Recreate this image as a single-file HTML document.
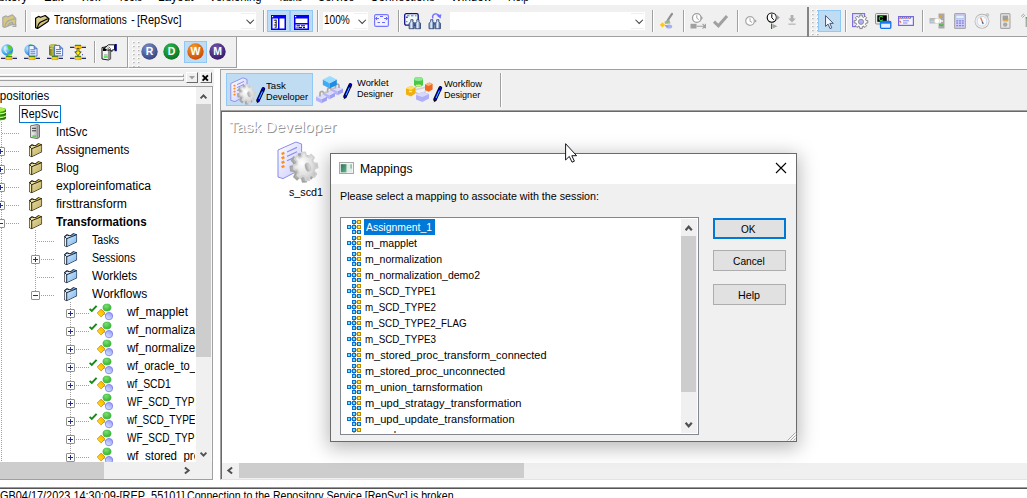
<!DOCTYPE html><html><head><meta charset="utf-8"><title>Workflow Manager</title><style>
html,body{margin:0;padding:0}
body{width:1027px;height:498px;overflow:hidden;position:relative;background:#fff;font-family:"Liberation Sans",sans-serif;}
.t{position:absolute;white-space:pre;transform-origin:0 50%;}
.b{position:absolute;box-sizing:border-box;}
svg{position:absolute;overflow:visible}
.clip{position:absolute;overflow:hidden}
</style></head><body>
<svg width="0" height="0" style="position:absolute"><defs><linearGradient id="gKh" x1="0" y1="0" x2="1" y2="1"><stop offset="0" stop-color="#e8dca0"/><stop offset="1" stop-color="#bfae62"/></linearGradient><linearGradient id="gBl" x1="0" y1="0" x2="1" y2="1"><stop offset="0" stop-color="#d4ecff"/><stop offset="1" stop-color="#7ab4ee"/></linearGradient><radialGradient id="gGlobe" cx="0.35" cy="0.35" r="0.8"><stop offset="0" stop-color="#c8f0ff"/><stop offset="0.6" stop-color="#40a0f0"/><stop offset="1" stop-color="#1060d0"/></radialGradient><radialGradient id="gGreen" cx="0.4" cy="0.3" r="0.8"><stop offset="0" stop-color="#7be070"/><stop offset="1" stop-color="#28b028"/></radialGradient><linearGradient id="gLav" x1="0.7" y1="0" x2="0.2" y2="1"><stop offset="0" stop-color="#9898f8"/><stop offset="1" stop-color="#d4ecff"/></linearGradient><linearGradient id="gYel" x1="0" y1="1" x2="1" y2="0"><stop offset="0" stop-color="#ffe878"/><stop offset="0.5" stop-color="#ffc800"/><stop offset="1" stop-color="#f0b000"/></linearGradient><radialGradient id="gGear" cx="0.4" cy="0.35" r="0.8"><stop offset="0" stop-color="#ffffff"/><stop offset="0.6" stop-color="#dcdcdc"/><stop offset="1" stop-color="#a8a8a8"/></radialGradient><linearGradient id="gSheet" x1="0" y1="0" x2="1" y2="1"><stop offset="0" stop-color="#ffffff"/><stop offset="1" stop-color="#c8c8ff"/></linearGradient><linearGradient id="gBino" x1="0" y1="0" x2="1" y2="0"><stop offset="0" stop-color="#7090c8"/><stop offset="0.45" stop-color="#e8f0ff"/><stop offset="1" stop-color="#284888"/></linearGradient><linearGradient id="gDb" x1="0" y1="0" x2="1" y2="0"><stop offset="0" stop-color="#b0f060"/><stop offset="0.5" stop-color="#58c818"/><stop offset="1" stop-color="#207800"/></linearGradient><linearGradient id="gSrv" x1="0" y1="0" x2="1" y2="0"><stop offset="0" stop-color="#f4f4f4"/><stop offset="1" stop-color="#a8a8a8"/></linearGradient><linearGradient id="gOlive" x1="0" y1="0" x2="1" y2="0"><stop offset="0" stop-color="#6a6a10"/><stop offset="0.4" stop-color="#b0b040"/><stop offset="1" stop-color="#707018"/></linearGradient><linearGradient id="gHole" x1="0" y1="0" x2="1" y2="0"><stop offset="0" stop-color="#9c9c9c"/><stop offset="1" stop-color="#e8e8e8"/></linearGradient><symbol id="i-chev" viewBox="0 0 9 6" overflow="visible"><path d="M0.5 0.8L4.5 4.8L8.5 0.8" stroke="#404040" stroke-width="1.1" fill="none"/></symbol><symbol id="i-grip" viewBox="0 0 7 25" overflow="visible"><rect x="0.3" y="0" width="2" height="2" fill="#fff"/><rect x="1.3" y="1" width="1.2" height="1.2" fill="#a0a0a0"/><rect x="0.3" y="4" width="2" height="2" fill="#fff"/><rect x="1.3" y="5" width="1.2" height="1.2" fill="#a0a0a0"/><rect x="0.3" y="8" width="2" height="2" fill="#fff"/><rect x="1.3" y="9" width="1.2" height="1.2" fill="#a0a0a0"/><rect x="0.3" y="12" width="2" height="2" fill="#fff"/><rect x="1.3" y="13" width="1.2" height="1.2" fill="#a0a0a0"/><rect x="0.3" y="16" width="2" height="2" fill="#fff"/><rect x="1.3" y="17" width="1.2" height="1.2" fill="#a0a0a0"/><rect x="0.3" y="20" width="2" height="2" fill="#fff"/><rect x="1.3" y="21" width="1.2" height="1.2" fill="#a0a0a0"/><rect x="0.3" y="24" width="2" height="2" fill="#fff"/><rect x="1.3" y="25" width="1.2" height="1.2" fill="#a0a0a0"/><rect x="5.2" y="0" width="2" height="2" fill="#fff"/><rect x="6.2" y="1" width="1.2" height="1.2" fill="#a0a0a0"/><rect x="5.2" y="4" width="2" height="2" fill="#fff"/><rect x="6.2" y="5" width="1.2" height="1.2" fill="#a0a0a0"/><rect x="5.2" y="8" width="2" height="2" fill="#fff"/><rect x="6.2" y="9" width="1.2" height="1.2" fill="#a0a0a0"/><rect x="5.2" y="12" width="2" height="2" fill="#fff"/><rect x="6.2" y="13" width="1.2" height="1.2" fill="#a0a0a0"/><rect x="5.2" y="16" width="2" height="2" fill="#fff"/><rect x="6.2" y="17" width="1.2" height="1.2" fill="#a0a0a0"/><rect x="5.2" y="20" width="2" height="2" fill="#fff"/><rect x="6.2" y="21" width="1.2" height="1.2" fill="#a0a0a0"/><rect x="5.2" y="24" width="2" height="2" fill="#fff"/><rect x="6.2" y="25" width="1.2" height="1.2" fill="#a0a0a0"/></symbol><symbol id="i-foldy" viewBox="0 0 14 14" overflow="visible"><path d="M0.6 3.6L3 1.7L4.8 2.5L6.8 2.7L9.4 0.7L12.5 1.7V8.7L2.7 13.6L0.6 12.6Z" fill="#f0e6a4" stroke="#161000" stroke-width="1.1" stroke-linejoin="round"/><path d="M7 2.8L9.4 0.9L12.3 1.8L8.6 3.3Z" fill="#d8c048"/><path d="M2.7 5.7L12.5 1.7V8.7L2.7 13.6Z" fill="url(#gKh)"/><path d="M0.6 3.6L2.7 5.7V13.6L0.6 12.6Z" fill="#f4ecb8"/><path d="M0.6 3.6L2.7 5.7V13.6M2.7 5.7L12.5 1.7" fill="none" stroke="#161000" stroke-width="0.9"/></symbol><symbol id="i-foldb" viewBox="0 0 14 14" overflow="visible"><path d="M0.6 3.6L3 1.7L4.8 2.5L6.8 2.7L9.4 0.7L12.5 1.7V8.7L2.7 13.6L0.6 12.6Z" fill="#d8ecff" stroke="#0c1420" stroke-width="1.1" stroke-linejoin="round"/><path d="M7 2.8L9.4 0.9L12.3 1.8L8.6 3.3Z" fill="#6aa8e8"/><path d="M2.7 5.7L12.5 1.7V8.7L2.7 13.6Z" fill="url(#gBl)"/><path d="M0.6 3.6L2.7 5.7V13.6L0.6 12.6Z" fill="#eaf4ff"/><path d="M0.6 3.6L2.7 5.7V13.6M2.7 5.7L12.5 1.7" fill="none" stroke="#0c1420" stroke-width="0.9"/></symbol><symbol id="i-openfolder" viewBox="0 0 15 14" overflow="visible"><path d="M0.6 3.3L3.6 1.4L5.5 2.3L10.2 0.5L14 3.8L13 6.6L2.6 13.5L0.6 12.6Z" fill="url(#gKh)" stroke="#000" stroke-width="1.2" stroke-linejoin="round"/><path d="M2.5 13.3C2.8 10 4 8 5.8 7L12.8 3.8" fill="none" stroke="#000" stroke-width="1.1"/></symbol><symbol id="i-openfolder-gray" viewBox="0 0 16 16" overflow="visible"><path d="M0.8 3.4L4.2 1.9L5.8 2.9L10.4 0.8L13.8 4.4L13.6 10L10.2 10.4L2.4 13.4L0.8 12.4Z" fill="#d6c880" stroke="#a8a8a8" stroke-width="1.2" stroke-linejoin="round"/><path d="M3 12C3.5 9 5 7 8 6.2L13 4.6M6 11C7 9 8.5 8.3 10.5 8.6L10.6 10.6H13.8V12.4H10.4" fill="none" stroke="#a8a8a8" stroke-width="1.2"/></symbol><symbol id="i-check" viewBox="0 0 8 7" overflow="visible"><path d="M0.6 3.8L2.8 6L7.6 0.8" stroke="#188818" stroke-width="1.9" fill="none"/></symbol><symbol id="i-wf" viewBox="0 0 16 16" overflow="visible"><path d="M4.5 9L10 4M4.5 9.5L12 12" stroke="#b8b8c8" stroke-width="0.9"/><ellipse cx="10" cy="3.5" rx="4.1" ry="3.5" fill="url(#gGreen)" stroke="#30b030" stroke-width="0.5"/><circle cx="12" cy="12.1" r="3.7" fill="url(#gLav)" stroke="#7878e8" stroke-width="0.8"/><path d="M4.1 5.1L8 9L4.1 12.9L0.2 9Z" fill="url(#gYel)" stroke="#c88c00" stroke-width="0.8"/></symbol><symbol id="i-db" viewBox="0 0 16 14" overflow="visible"><path d="M0 2.5C0 -0.3 16 -0.3 16 2.5V11C16 14.3 0 14.3 0 11Z" fill="url(#gDb)"/><path d="M0 5.2C2 7.6 14 7.6 16 5.2M0 8.8C2 11.2 14 11.2 16 8.8" stroke="#d8ff90" stroke-width="1.3" fill="none"/><path d="M0 6.4C2 8.8 14 8.8 16 6.4M0 10C2 12.4 14 12.4 16 10" stroke="#186000" stroke-width="0.8" fill="none"/><ellipse cx="8" cy="2.6" rx="7.6" ry="2.2" fill="#a8f048"/></symbol><symbol id="i-server" viewBox="0 0 10 15" overflow="visible"><path d="M0.6 1.8L7 0.5L9.5 1.2V13.2L7.4 14.6L0.6 13.4Z" fill="url(#gSrv)" stroke="#606060" stroke-width="0.9" stroke-linejoin="round"/><path d="M7.3 1.6V14.4" stroke="#808080" stroke-width="0.8"/><path d="M2 4.3H6.2M2 6.8H6.2" stroke="#202020" stroke-width="0.9"/><path d="M2.4 12.1H6" stroke="#20d020" stroke-width="1.2"/></symbol><symbol id="i-map" viewBox="0 0 14 14" overflow="visible"><path d="M2 7H7M7 2V12M7 2H12M7 7H12M7 12H12" stroke="#806020" stroke-width="1"/><rect x="5.5" y="0.5" width="3" height="3" fill="#70e4ff" stroke="#0c6cd4" stroke-width="1"/><rect x="10.5" y="0.5" width="3" height="3" fill="#ffe848" stroke="#b88800" stroke-width="1"/><rect x="0.5" y="5.5" width="3" height="3" fill="#70e4ff" stroke="#0c6cd4" stroke-width="1"/><rect x="5.5" y="5.5" width="3" height="3" fill="#70e4ff" stroke="#0c6cd4" stroke-width="1"/><rect x="10.5" y="5.5" width="3" height="3" fill="#ffe848" stroke="#b88800" stroke-width="1"/><rect x="5.5" y="10.5" width="3" height="3" fill="#70e4ff" stroke="#0c6cd4" stroke-width="1"/><rect x="10.5" y="10.5" width="3" height="3" fill="#70e4ff" stroke="#0c6cd4" stroke-width="1"/></symbol><symbol id="i-navwin" viewBox="0 0 15 15" overflow="visible"><rect x="0" y="0" width="15" height="15" fill="#0000ff"/><rect x="1.5" y="3.5" width="5.5" height="10" fill="#fff"/><rect x="8.5" y="3.5" width="5" height="10" fill="#fff"/><rect x="1" y="1" width="1.2" height="1.2" fill="#fff"/><path d="M5.2 4.6V12.6M2.8 5.2H5.2M3.6 7.6H5.2M2.8 10H5.2M3.6 12.2H5.2" stroke="#000" stroke-width="0.85"/></symbol><symbol id="i-outwin" viewBox="0 0 15 15" overflow="visible"><rect x="0" y="0" width="15" height="15" fill="#0000ff"/><rect x="1.5" y="3.5" width="12" height="4.5" fill="#fff"/><rect x="1.5" y="9.5" width="12" height="4" fill="#fff"/><rect x="1" y="1" width="1.2" height="1.2" fill="#fff"/><path d="M2.5 10.8H6M7 10.8H11M2.5 12.6H3.5M4.5 12.6H8M9 12.6H11" stroke="#000" stroke-width="1"/></symbol><symbol id="i-fit" viewBox="0 0 15 13" overflow="visible"><rect x="0.6" y="0.6" width="13.8" height="11.8" rx="1.5" fill="#f4f4ff" stroke="#7878ff" stroke-width="1.2"/><path d="M1.5 4.5H5M13.5 4.5H10M3.2 2.8L1.5 4.5L3.2 6.2M11.8 2.8L13.5 4.5L11.8 6.2M6 2.5H9M3.5 8.5H6M8 8.5H11" stroke="#6868f8" stroke-width="1" fill="none"/></symbol><symbol id="i-find" viewBox="0 0 17 16" overflow="visible"><rect x="0.7" y="0.7" width="13.5" height="11.5" rx="1.5" fill="#f8f8f8" stroke="#101080" stroke-width="1.3"/><path d="M3 2.8H5.5M7 2.8H9.5M11 2.8H12.5" stroke="#10a0a0" stroke-width="1"/><rect x="2.2" y="3.6" width="1.4" height="1.4" fill="#0000e0"/><rect x="2.2" y="8" width="1.2" height="1.2" fill="#10a0a0"/><g transform="translate(4.6 6.2)"><path d="M2.2 0.5H4.4V2.5L5.6 4V9.5H0.5V4L2.2 2.5Z" fill="url(#gBino)" stroke="#28406c" stroke-width="0.8"/><path d="M8.2 0.5H10.4V2.5L11.9 4V9.5H6.8V4L8.2 2.5Z" fill="url(#gBino)" stroke="#28406c" stroke-width="0.8"/><rect x="5.2" y="3.2" width="2" height="2.2" fill="#3c5c98"/></g></symbol><symbol id="i-findnext" viewBox="0 0 15 16" overflow="visible"><path d="M5 5.5C3.5 2.5 6 0.6 8.2 0.9C10.2 1.2 11 2.5 11.2 3.6" stroke="#7070ff" stroke-width="1.4" fill="none"/><path d="M8.6 2.6L13.4 1.2L12.6 5.8Z" fill="#7070ff"/><g transform="translate(0.5 6.2)"><path d="M2.2 0.5H4.4V2.5L5.6 4V9.5H0.5V4L2.2 2.5Z" fill="url(#gBino)" stroke="#28406c" stroke-width="0.8"/><path d="M8.2 0.5H10.4V2.5L11.9 4V9.5H6.8V4L8.2 2.5Z" fill="url(#gBino)" stroke="#28406c" stroke-width="0.8"/><rect x="5.2" y="3.2" width="2" height="2.2" fill="#3c5c98"/></g></symbol><symbol id="i-broom" viewBox="0 0 14 16" overflow="visible"><path d="M12 0.8L7.6 7.5" stroke="#909090" stroke-width="2.2" stroke-linecap="round"/><path d="M4.5 8.5L9.5 7L10.5 10.5L5 11Z" fill="#b0b0b0"/><path d="M5.8 8.8H9.2" stroke="#70d040" stroke-width="1.2"/><path d="M2.5 9.2L5.2 12L2.5 14.4L-0.2 12Z" fill="#ffc818"/><ellipse cx="9" cy="13.6" rx="3.2" ry="2" fill="#a8b0f4"/><path d="M5 12.5L8 13.5" stroke="#909090"/></symbol><symbol id="i-clockarrow" viewBox="0 0 16 16" overflow="visible"><circle cx="6.8" cy="5" r="4.3" fill="#fff" stroke="#a0a0a0" stroke-width="1.3"/><path d="M6.8 2.2V5.2L8.8 6.6" stroke="#a0a0a0" stroke-width="1" fill="none"/><path d="M10.8 3L13 5L10.8 7Z" fill="#a0a0a0"/><rect x="0.5" y="10.8" width="6" height="4.7" fill="#a0a0a0"/><path d="M6.5 13.2H15M12.5 10.8L15 13.2L12.5 15.6M15.4 10.8V15.6" stroke="#a0a0a0" stroke-width="1.1" fill="none"/></symbol><symbol id="i-checkgray" viewBox="0 0 15 12" overflow="visible"><path d="M1 6.6L5.4 10.8L14 1" stroke="#a0a0a0" stroke-width="3" fill="none"/></symbol><symbol id="i-clockgray" viewBox="0 0 12 10" overflow="visible"><circle cx="5" cy="5" r="4.3" fill="#fff" stroke="#a8a8a8" stroke-width="1.2"/><path d="M5 2.2V5.2L7 6.4" stroke="#a8a8a8" stroke-width="1" fill="none"/><path d="M9.6 3L11.8 5L9.6 7Z" fill="#a8a8a8"/></symbol><symbol id="i-clockgreen" viewBox="0 0 13 17" overflow="visible"><circle cx="4.8" cy="5.6" r="4.6" fill="#fff" stroke="#000" stroke-width="1.1"/><path d="M4.8 2.2V5.8L6.8 7.8" stroke="#000" stroke-width="1" fill="none"/><path d="M9.4 2.4L12.8 5.6L9.4 8.8Z" fill="#a0a0a0"/><rect x="4" y="11.5" width="1.2" height="5.5" fill="#108010"/><path d="M5.6 12L10.4 14.2L5.6 16.4Z" fill="#a0a0a0"/></symbol><symbol id="i-dlgray" viewBox="0 0 8 10" overflow="visible"><path d="M2.6 0H5.4V3.6H7.8L4 7.4L0.2 3.6H2.6Z" fill="#b0b0b0"/><rect x="0.4" y="8.6" width="7.2" height="1.1" fill="#b0b0b0"/></symbol><symbol id="i-pointer" viewBox="0 0 10 16" overflow="visible"><path d="M0.6 0.6V12.6L3.4 10L5.6 15L7.6 14.2L5.4 9.2H9.2Z" fill="#f4f8ff" stroke="#38486c" stroke-width="1" stroke-linejoin="round"/></symbol><symbol id="i-gear" viewBox="0 0 16 16" overflow="visible"><rect x="0.6" y="0.6" width="12" height="13" fill="#e0e8ff" stroke="#7c68e0" stroke-width="1.1"/><path d="M15.80 7.61L15.80 9.99L14.06 10.01L13.43 11.52L14.65 12.77L12.97 14.45L11.72 13.23L10.21 13.86L10.19 15.60L7.81 15.60L7.79 13.86L6.28 13.23L5.03 14.45L3.35 12.77L4.57 11.52L3.94 10.01L2.20 9.99L2.20 7.61L3.94 7.59L4.57 6.08L3.35 4.83L5.03 3.15L6.28 4.37L7.79 3.74L7.81 2.00L10.19 2.00L10.21 3.74L11.72 4.37L12.97 3.15L14.65 4.83L13.43 6.08L14.06 7.59Z" fill="#fafafa" stroke="#787878" stroke-width="0.9" stroke-linejoin="round"/><circle cx="9" cy="8.8" r="2.6" fill="#b0b0f4" stroke="#787878" stroke-width="0.7200000000000001"/></symbol><symbol id="i-cmd" viewBox="0 0 16 16" overflow="visible"><rect x="0.5" y="0.5" width="13" height="10.5" rx="1" fill="#e8e8e8" stroke="#909090" stroke-width="1"/><rect x="2.3" y="2.3" width="9.5" height="6.5" fill="#000"/><rect x="5.5" y="8.3" width="10.3" height="7" rx="1" fill="#e0ecff" stroke="#1070e8" stroke-width="1.3"/><rect x="5.5" y="8.3" width="10.3" height="2.4" fill="#1878f0"/></symbol><symbol id="i-email" viewBox="0 0 16 10" overflow="visible"><rect x="0.6" y="0.6" width="14.8" height="8.8" fill="#f4f4ff" stroke="#7868e0" stroke-width="1.2"/><path d="M1.5 2.8L3 1.2M5.5 2.8L7 1.2M9.5 2.8L11 1.2M1.5 5L3 6.5" stroke="#f06030" stroke-width="1.2"/><path d="M3.5 2.8L5 1.2M7.5 2.8L9 1.2M11.5 2.8L13 1.2" stroke="#3080f0" stroke-width="1.2"/><path d="M5 4.8H11M5 7H9.5" stroke="#8888f0" stroke-width="1"/></symbol><symbol id="i-g1" viewBox="0 0 16 16" overflow="visible"><path d="M9.5 0.5H15.5V15.5H9.5V12L12 9.5V6.5L9.5 4Z" fill="#a8a8a8"/><rect x="0.5" y="5" width="8" height="5.5" fill="#b8b8b8"/><rect x="1.6" y="7.6" width="3.4" height="1.8" fill="#a8d8f8"/><circle cx="8" cy="8" r="2.7" fill="#fff" stroke="#d0d0d0" stroke-width="0.6"/><path d="M9.8 5.5L12 2.2H15" stroke="#f0a020" stroke-width="1.1" fill="none"/><path d="M10 10.5C10.5 12.5 12.5 13 14.5 11.5" stroke="#30c030" stroke-width="1.2" fill="none"/><path d="M11 8H14" stroke="#fff" stroke-width="1.4"/></symbol><symbol id="i-calc" viewBox="0 0 12 16" overflow="visible"><rect x="0.6" y="0.6" width="10.8" height="14.8" rx="1" fill="#d0d0fc" stroke="#a8a8a8" stroke-width="1.1"/><rect x="2" y="2.2" width="8" height="3.2" fill="#d8f8ff" stroke="#a8a8e8" stroke-width="0.5"/><path d="M2.2 7.8H4.2M5 7.8H7M7.8 7.8H9.8M2.2 10.2H4.2M5 10.2H7M7.8 10.2H9.8M2.2 12.6H4.2M5 12.6H7M7.8 12.6H9.8" stroke="#8080d8" stroke-width="1.2"/></symbol><symbol id="i-timer" viewBox="0 0 17 16" overflow="visible"><circle cx="13.4" cy="2" r="1.5" fill="#d0d0d0" stroke="#b0b0b0" stroke-width="0.5"/><circle cx="8" cy="8.2" r="7.4" fill="#a8a8a8"/><circle cx="8" cy="8.2" r="6.8" fill="#ececec"/><circle cx="8" cy="8.2" r="5" fill="#b8c8d8"/><circle cx="8" cy="8.2" r="4.5" fill="#f4faff"/><path d="M6.6 4.6L8.6 9.4" stroke="#f07838" stroke-width="1.3"/><path d="M8.4 9L9.2 11" stroke="#505868" stroke-width="1.2"/></symbol><symbol id="i-ctl" viewBox="0 0 11 16" overflow="visible"><rect x="0.6" y="0.6" width="9.4" height="14.8" rx="1" fill="#e4e4e4" stroke="#a8a8a8" stroke-width="1.1"/><rect x="2.6" y="2.6" width="5.4" height="5" fill="#a0a0a0"/><path d="M3.2 7.8H7.6L8.2 5.6" stroke="#f0a820" stroke-width="1.2" fill="none"/><circle cx="5.2" cy="11.6" r="2.2" fill="#a8a8a8"/></symbol><symbol id="i-g2" viewBox="0 0 8 16" overflow="visible"><path d="M0 3.5L3 0.8M1.4 4.5L4.2 2" stroke="#a0a0a0" stroke-width="0.9"/><rect x="4.6" y="5" width="4" height="9" fill="#a8a8a8"/><rect x="4.6" y="4" width="3" height="1.4" fill="#30c030"/></symbol><symbol id="i-net1" viewBox="0 0 16 16" overflow="visible"><circle cx="6.2" cy="6" r="5.8" fill="url(#gGlobe)"/><path d="M6 1C9 0.5 11.5 3 11 6.5C10 6.8 8 6 7.2 4.5C6.6 3.2 6.8 2 6 1Z" fill="#58d028"/><path d="M6 10.5C8 9.2 10.5 9.4 12 8L11 10.5C9.5 11.6 7.5 11.6 6 10.5Z" fill="#58d028"/><path d="M4.5 2C3 4 3.4 7.5 6 9" stroke="#e8f8ff" stroke-width="1.2" fill="none" opacity="0.8"/><rect x="5" y="12.4" width="6" height="3.4" fill="url(#gYel)" stroke="#c88800" stroke-width="0.5"/><rect x="5" y="11.8" width="6" height="1" fill="#208020"/><path d="M0 13.4H4.4M11.6 13.4H16" stroke="#b8b8b8" stroke-width="1"/><path d="M0 14.5H4.4M11.6 14.5H16" stroke="#282868" stroke-width="1.2"/></symbol><symbol id="i-net2" viewBox="0 0 16 16" overflow="visible"><circle cx="6.2" cy="6" r="5.8" fill="url(#gGlobe)"/><path d="M5.5 0.6H8.5V1.8H5.5Z" fill="#58d028"/><path d="M5 1.6H10L13 4.6V12.1H5Z" fill="#f4f8ff" stroke="#3058b8" stroke-width="0.8"/><path d="M10 1.6V4.6H13" fill="#7098e0" stroke="#3058b8" stroke-width="0.6"/><path d="M6.4 5.800000000000001H11.4M6.4 7.800000000000001H11.4M6.4 9.799999999999999H11.4" stroke="#4878d8" stroke-width="1"/><rect x="5" y="12.4" width="6" height="3.4" fill="url(#gYel)" stroke="#c88800" stroke-width="0.5"/><rect x="5" y="11.8" width="6" height="1" fill="#208020"/><path d="M0 13.4H4.4M11.6 13.4H16" stroke="#b8b8b8" stroke-width="1"/><path d="M0 14.5H4.4M11.6 14.5H16" stroke="#282868" stroke-width="1.2"/></symbol><symbol id="i-net3" viewBox="0 0 16 16" overflow="visible"><path d="M2 1.8C2 -0.3 11 -0.3 11 1.8V10.5C11 12.5 2 12.5 2 10.5Z" fill="url(#gOlive)"/><ellipse cx="6.5" cy="1.9" rx="4.3" ry="1.3" fill="#c0c060"/><path d="M3 4.4H5.5" stroke="#d8d890" stroke-width="1"/><path d="M7.6 1.4H12.6L15.6 4.4V11.9H7.6Z" fill="#f4f8ff" stroke="#3058b8" stroke-width="0.8"/><path d="M12.6 1.4V4.4H15.6" fill="#7098e0" stroke="#3058b8" stroke-width="0.6"/><path d="M9.0 5.6H14.0M9.0 7.6H14.0M9.0 9.6H14.0" stroke="#4878d8" stroke-width="1"/><rect x="5" y="12.4" width="6" height="3.4" fill="url(#gYel)" stroke="#c88800" stroke-width="0.5"/><rect x="5" y="11.8" width="6" height="1" fill="#208020"/><path d="M0 13.4H4.4M11.6 13.4H16" stroke="#b8b8b8" stroke-width="1"/><path d="M0 14.5H4.4M11.6 14.5H16" stroke="#282868" stroke-width="1.2"/></symbol><symbol id="i-net4" viewBox="0 0 16 16" overflow="visible"><g transform="translate(0 -11)"><rect x="5" y="12.4" width="6" height="3.4" fill="url(#gYel)" stroke="#c88800" stroke-width="0.5"/><rect x="5" y="11.8" width="6" height="1" fill="#208020"/><path d="M0 13.4H4.4M11.6 13.4H16" stroke="#b8b8b8" stroke-width="1"/><path d="M0 14.5H4.4M11.6 14.5H16" stroke="#282868" stroke-width="1.2"/></g><rect x="5" y="12.4" width="6" height="3.4" fill="url(#gYel)" stroke="#c88800" stroke-width="0.5"/><rect x="5" y="11.8" width="6" height="1" fill="#208020"/><path d="M0 13.4H4.4M11.6 13.4H16" stroke="#b8b8b8" stroke-width="1"/><path d="M0 14.5H4.4M11.6 14.5H16" stroke="#282868" stroke-width="1.2"/><path d="M7 4.4H9V7.8H11.2L8 11.8L4.8 7.8H7Z" fill="#fff000" stroke="#000" stroke-width="0.6"/><rect x="12" y="10.2" width="1" height="1" fill="#2020a0"/></symbol><symbol id="i-prop" viewBox="0 0 16 16" overflow="visible"><path d="M1 3.5L7.5 2.5L9.6 3.6V15L7.4 16L1 15Z" fill="#f4f4f4" stroke="#000" stroke-width="0.9" stroke-linejoin="round"/><path d="M7.4 4.5V16" stroke="#707070" stroke-width="0.8"/><path d="M7.4 4.6L9.6 3.6V15L7.4 16Z" fill="#909090"/><path d="M2 4.5L5.5 2L7.5 4.2L5 7H2Z" fill="#000"/><path d="M3 11H6.6" stroke="#909090" stroke-width="1"/><path d="M2.8 13H6.8" stroke="#18e018" stroke-width="1.3"/><path d="M3.5 4L7.5 0.8H13.5V5.8H11.5L10.8 7.6L9.8 5.8L6.5 6.2" fill="#fff" stroke="#000" stroke-width="0.9" stroke-linejoin="round"/><path d="M5 4.6L7 6.6M6.2 3.6L8.4 5.8M7.4 2.6L9.6 4.8" stroke="#000" stroke-width="0.7"/><rect x="13.6" y="0" width="2.2" height="7.2" fill="#000090"/></symbol><symbol id="i-pen" viewBox="0 0 9 17" overflow="visible"><path d="M7.4 1.8L2 13.6" stroke="#000" stroke-width="3.6" stroke-linecap="round"/><path d="M2.2 13L0.6 16.6L3.6 14Z" fill="#000"/><path d="M7.4 1.8L2.2 13.2" stroke="#0000e0" stroke-width="2.2" stroke-linecap="round"/><path d="M6.4 4.6L3 12" stroke="#40d8ff" stroke-width="0.9"/><path d="M5.6 2.6L8.4 4" stroke="#000" stroke-width="0.7"/></symbol><symbol id="i-taskdev" viewBox="0 0 28 26" overflow="visible"><path d="M0.8 6.5L13 0.8L17 2.4V18L5 24.6L0.8 23.4Z" fill="url(#gSheet)" stroke="#8080e8" stroke-width="0.8" stroke-linejoin="round"/><path d="M3.6 9L5.4 8.2M3.6 12L5.4 11.2M3.6 15L5.4 14.2M3.6 18L5.4 17.2" stroke="#ff8c18" stroke-width="1.8"/><path d="M7 7.6L14 4.4M7 10.6L14 7.4M7 13.6L12 11.2" stroke="#9090f0" stroke-width="1"/><path d="M9.39 0.40L8.81 3.29L6.30 3.05L5.20 4.69L6.36 6.93L3.90 8.55L2.30 6.61L0.36 6.99L-0.40 9.39L-3.29 8.81L-3.05 6.30L-4.69 5.20L-6.93 6.36L-8.55 3.90L-6.61 2.30L-6.99 0.36L-9.39 -0.40L-8.81 -3.29L-6.30 -3.05L-5.20 -4.69L-6.36 -6.93L-3.90 -8.55L-2.30 -6.61L-0.36 -6.99L0.40 -9.39L3.29 -8.81L3.05 -6.30L4.69 -5.20L6.93 -6.36L8.55 -3.90L6.61 -2.30L6.99 -0.36Z" transform="translate(15.600000000000001 17.79) rotate(-18) scale(0.84 1)" fill="#b0b0b0" stroke="#a4a4a4" stroke-width="1.22" stroke-linejoin="round"/><path d="M9.39 0.40L8.81 3.29L6.30 3.05L5.20 4.69L6.36 6.93L3.90 8.55L2.30 6.61L0.36 6.99L-0.40 9.39L-3.29 8.81L-3.05 6.30L-4.69 5.20L-6.93 6.36L-8.55 3.90L-6.61 2.30L-6.99 0.36L-9.39 -0.40L-8.81 -3.29L-6.30 -3.05L-5.20 -4.69L-6.36 -6.93L-3.90 -8.55L-2.30 -6.61L-0.36 -6.99L0.40 -9.39L3.29 -8.81L3.05 -6.30L4.69 -5.20L6.93 -6.36L8.55 -3.90L6.61 -2.30L6.99 -0.36Z" transform="translate(17.8 16.8) rotate(-18) scale(0.84 1)" fill="url(#gGear)" stroke="#d4d4d4" stroke-width="1.22" stroke-linejoin="round"/><ellipse cx="1.50" cy="0.94" rx="1.96" ry="2.80" transform="translate(17.8 16.8) rotate(-18) scale(0.84 1)" fill="url(#gHole)" stroke="#b8b8b8" stroke-width="0.6"/></symbol><symbol id="i-taskbig" viewBox="0 0 44 40" overflow="visible"><path d="M1 9L19 1L24.6 3V28L6 37.6L1 36Z" fill="url(#gSheet)" stroke="#8080e8" stroke-width="0.9" stroke-linejoin="round"/><path d="M4.6 13L7.4 11.8M4.6 17.4L7.4 16.2M4.6 21.8L7.4 20.6M4.6 26.2L7.4 25" stroke="#ff8c18" stroke-width="2.4"/><path d="M10 11L20 6.4M10 15.4L20 10.8M10 19.8L17 16.6" stroke="#9090f0" stroke-width="1.2"/><path d="M14.19 0.61L13.30 4.96L9.54 4.62L7.87 7.10L9.60 10.46L5.90 12.92L3.48 10.01L0.54 10.59L-0.61 14.19L-4.96 13.30L-4.62 9.54L-7.10 7.87L-10.46 9.60L-12.92 5.90L-10.01 3.48L-10.59 0.54L-14.19 -0.61L-13.30 -4.96L-9.54 -4.62L-7.87 -7.10L-9.60 -10.46L-5.90 -12.92L-3.48 -10.01L-0.54 -10.59L0.61 -14.19L4.96 -13.30L4.62 -9.54L7.10 -7.87L10.46 -9.60L12.92 -5.90L10.01 -3.48L10.59 -0.54Z" transform="translate(25.400000000000002 26.84) rotate(-18) scale(0.84 1)" fill="#b0b0b0" stroke="#a4a4a4" stroke-width="1.85" stroke-linejoin="round"/><path d="M14.19 0.61L13.30 4.96L9.54 4.62L7.87 7.10L9.60 10.46L5.90 12.92L3.48 10.01L0.54 10.59L-0.61 14.19L-4.96 13.30L-4.62 9.54L-7.10 7.87L-10.46 9.60L-12.92 5.90L-10.01 3.48L-10.59 0.54L-14.19 -0.61L-13.30 -4.96L-9.54 -4.62L-7.87 -7.10L-9.60 -10.46L-5.90 -12.92L-3.48 -10.01L-0.54 -10.59L0.61 -14.19L4.96 -13.30L4.62 -9.54L7.10 -7.87L10.46 -9.60L12.92 -5.90L10.01 -3.48L10.59 -0.54Z" transform="translate(28.6 25.4) rotate(-18) scale(0.84 1)" fill="url(#gGear)" stroke="#d4d4d4" stroke-width="1.85" stroke-linejoin="round"/><ellipse cx="2.27" cy="1.42" rx="3.08" ry="4.40" transform="translate(28.6 25.4) rotate(-18) scale(0.84 1)" fill="url(#gHole)" stroke="#b8b8b8" stroke-width="0.6"/></symbol><symbol id="i-worklet" viewBox="0 0 32 26" overflow="visible"><path d="M16.0 12.6L21.5 15.2V19.2L16.0 16.6Z" fill="#b4b4fa"/><path d="M21.5 15.2L27.0 12.6V16.6L21.5 19.2Z" fill="#a0a0f2"/><path d="M16.0 12.6L21.5 10.0L27.0 12.6L21.5 15.2Z" fill="#dcdcff"/><path d="M8.0 16.6L13.5 19.200000000000003V23.200000000000003L8.0 20.6Z" fill="#b4b4fa"/><path d="M13.5 19.200000000000003L19.0 16.6V20.6L13.5 23.200000000000003Z" fill="#a0a0f2"/><path d="M8.0 16.6L13.5 14.000000000000002L19.0 16.6L13.5 19.200000000000003Z" fill="#dcdcff"/><path d="M0.0 20.6L5.5 23.200000000000003V27.200000000000003L0.0 24.6Z" fill="#b4b4fa"/><path d="M5.5 23.200000000000003L11.0 20.6V24.6L5.5 27.200000000000003Z" fill="#a0a0f2"/><path d="M0.0 20.6L5.5 18.0L11.0 20.6L5.5 23.200000000000003Z" fill="#dcdcff"/><path d="M4 20.5V17.5C4 15 7.6 14.6 7.6 17.5V18.5M11.6 16.5V13.8C11.6 11.4 15.2 11 15.2 13.8V14.8M19.4 12.5V10C19.4 7.6 23 7.2 23 10V12" stroke="#a8a8a8" stroke-width="1.7" fill="none"/><path d="M7.6 17.6L11.6 15.4M15.2 13.8L19.4 11.4" stroke="#c0c0c0" stroke-width="1.6"/><path d="M6.800000000000001 3.6L13.8 7.2V12.600000000000001L6.800000000000001 9.0Z" fill="#40acf8"/><path d="M13.8 7.2L20.8 3.6V9.0L13.8 12.600000000000001Z" fill="#1c8ce8"/><path d="M6.800000000000001 3.6L13.8 0.0L20.8 3.6L13.8 7.2Z" fill="#98dcff"/></symbol><symbol id="i-workflow" viewBox="0 0 30 26" overflow="visible"><path d="M9 13L14 8M9 14L22 11M9 15L17 21M22 12L18 20" stroke="#d0d0d0" stroke-width="1.6"/><path d="M9 3C9 0.2 18 0.2 18 3V8.5C18 11.4 9 11.4 9 8.5Z" fill="#48c848"/><ellipse cx="13.5" cy="3" rx="4.4" ry="1.9" fill="#90e890"/><ellipse cx="13.5" cy="9.4" rx="3" ry="1" fill="#e8e870"/><path d="M20 8.5L24.5 6.6L27.6 8V13.4L23.6 15.8L20 14Z" fill="#f06820"/><path d="M20 8.5L24.5 6.6L27.6 8L23.6 10Z" fill="#ffb070"/><path d="M1 12.5L5.5 10L10.4 11.6V17.4L6 20.6L1 18.6Z" fill="#f0b010"/><path d="M1 12.5L5.5 10L10.4 11.6L6 14Z" fill="#ffe060"/><path d="M4 15.5H7" stroke="#fff0a0" stroke-width="1.4"/><path d="M11 19L17 16L24 18V22.6L17.4 26L11 23.6Z" fill="#b0b0f8"/><path d="M11 19L17 16L24 18L17.4 21Z" fill="#d8d8ff"/></symbol><symbol id="i-dlgicon" viewBox="0 0 15 12" overflow="visible"><rect x="0.5" y="0.5" width="14" height="11" fill="#f4f4f4" stroke="#a8a8a8" stroke-width="1"/><linearGradient id="gDl" x1="0" y1="0" x2="1" y2="1"><stop offset="0" stop-color="#307060"/><stop offset="1" stop-color="#60b880"/></linearGradient><rect x="1.8" y="2.2" width="5.8" height="8.2" fill="url(#gDl)"/><rect x="7.8" y="2.2" width="3" height="8.2" fill="#e4e8ec"/><rect x="11.2" y="2.2" width="1.8" height="4.6" fill="#8cc8a0"/><rect x="11.2" y="6.8" width="1.8" height="3.6" fill="#dce8f0"/></symbol></defs></svg>
<div class="b" style="left:0px;top:0px;width:1027px;height:5px;background:#fff"></div>
<div class="clip" style="left:0;top:0;width:1027px;height:5px">
<span class="t" style="left:-30.5px;top:-10.00px;font-size:12px;line-height:14px;color:#000;transform:scaleX(1.0025);">Repository</span>
<span class="t" style="left:43.6px;top:-10.00px;font-size:12px;line-height:14px;color:#000;transform:scaleX(0.9382);">Edit</span>
<span class="t" style="left:79.6px;top:-10.00px;font-size:12px;line-height:14px;color:#000;transform:scaleX(0.8297);">View</span>
<span class="t" style="left:117.8px;top:-10.00px;font-size:12px;line-height:14px;color:#000;transform:scaleX(0.8639);">Tools</span>
<span class="t" style="left:158px;top:-10.00px;font-size:12px;line-height:14px;color:#000;transform:scaleX(0.9881);">Layout</span>
<span class="t" style="left:208.6px;top:-10.00px;font-size:12px;line-height:14px;color:#000;transform:scaleX(0.9351);">Versioning</span>
<span class="t" style="left:277.7px;top:-10.00px;font-size:12px;line-height:14px;color:#000;transform:scaleX(0.7922);">Tasks</span>
<span class="t" style="left:317.8px;top:-10.00px;font-size:12px;line-height:14px;color:#000;transform:scaleX(0.9047);">Service</span>
<span class="t" style="left:369.6px;top:-10.00px;font-size:12px;line-height:14px;color:#000;transform:scaleX(0.9729);">Connections</span>
<span class="t" style="left:450.8px;top:-10.00px;font-size:12px;line-height:14px;color:#000;transform:scaleX(0.9583);">Window</span>
<span class="t" style="left:507.5px;top:-10.00px;font-size:12px;line-height:14px;color:#000;transform:scaleX(0.8510);">Help</span>
</div>
<div class="b" style="left:0px;top:5px;width:1027px;height:31px;background:#f0f0f0"></div>
<div class="b" style="left:0px;top:36px;width:1027px;height:1px;background:#a0a0a0"></div>
<div class="b" style="left:0px;top:37px;width:237px;height:31px;background:#f0f0f0"></div>
<div class="b" style="left:0px;top:67px;width:128px;height:1px;background:#a0a0a0"></div>
<svg style="left:2px;top:14px" width="16" height="16"><use href="#i-openfolder-gray"/></svg>
<div class="b" style="left:25px;top:10px;width:1px;height:22px;background:#a0a0a0"></div><div class="b" style="left:26px;top:10px;width:1px;height:22px;background:#fff"></div>
<div class="b" style="left:31px;top:12px;width:225px;height:18px;background:#fff"></div>
<svg style="left:35px;top:15px" width="15" height="14"><use href="#i-openfolder"/></svg>
<span class="t" style="left:54px;top:13.00px;font-size:12.5px;line-height:14px;color:#000;transform:scaleX(0.8103);">Transformations</span>
<span class="t" style="left:131.1px;top:13.00px;font-size:12.5px;line-height:14px;color:#000;transform:scaleX(0.9129);">-</span>
<span class="t" style="left:137px;top:13.00px;font-size:12.5px;line-height:14px;color:#000;transform:scaleX(0.8794);">[RepSvc]</span>
<div class="b" style="left:241px;top:13px;width:14px;height:16px;border-top:1px solid #efefef;border-bottom:1px solid #efefef"></div>
<svg style="left:246px;top:18.6px" width="8.4" height="5.6"><use href="#i-chev"/></svg>
<div class="b" style="left:263px;top:10px;width:1px;height:22px;background:#a0a0a0"></div><div class="b" style="left:264px;top:10px;width:1px;height:22px;background:#fff"></div>
<div class="b" style="left:267px;top:10px;width:23px;height:22px;background:#c0dcf3;border:1px solid #90c8f6"></div>
<div class="b" style="left:290px;top:10px;width:23px;height:22px;background:#c0dcf3;border:1px solid #90c8f6"></div>
<svg style="left:271px;top:15px" width="15" height="15"><use href="#i-navwin"/></svg>
<svg style="left:294px;top:15px" width="15" height="15"><use href="#i-outwin"/></svg>
<div class="b" style="left:317px;top:10px;width:1px;height:22px;background:#a0a0a0"></div><div class="b" style="left:318px;top:10px;width:1px;height:22px;background:#fff"></div>
<div class="b" style="left:323px;top:12px;width:45px;height:18px;background:#fff"></div>
<span class="t" style="left:324.3px;top:13.00px;font-size:12.5px;line-height:14px;color:#000;transform:scaleX(0.8070);">100%</span>
<div class="b" style="left:354px;top:13px;width:13px;height:16px;border-top:1px solid #efefef;border-bottom:1px solid #efefef"></div>
<svg style="left:357.8px;top:18.6px" width="8.4" height="5.6"><use href="#i-chev"/></svg>
<svg style="left:374px;top:14px" width="15" height="13"><use href="#i-fit"/></svg>
<div class="b" style="left:398px;top:10px;width:1px;height:22px;background:#a0a0a0"></div><div class="b" style="left:399px;top:10px;width:1px;height:22px;background:#fff"></div>
<svg style="left:404px;top:13px" width="17" height="16"><use href="#i-find"/></svg>
<svg style="left:428px;top:13px" width="15" height="16"><use href="#i-findnext"/></svg>
<div class="b" style="left:450px;top:12px;width:195px;height:18px;background:#fff"></div>
<div class="b" style="left:631px;top:13px;width:13px;height:16px;border-top:1px solid #efefef;border-bottom:1px solid #efefef"></div>
<svg style="left:635px;top:18.6px" width="8.4" height="5.6"><use href="#i-chev"/></svg>
<div class="b" style="left:652px;top:10px;width:1px;height:22px;background:#a0a0a0"></div><div class="b" style="left:653px;top:10px;width:1px;height:22px;background:#fff"></div>
<svg style="left:660px;top:13px" width="14" height="16"><use href="#i-broom"/></svg>
<div class="b" style="left:683px;top:10px;width:1px;height:22px;background:#a0a0a0"></div><div class="b" style="left:684px;top:10px;width:1px;height:22px;background:#fff"></div>
<svg style="left:690px;top:13px" width="16" height="16"><use href="#i-clockarrow"/></svg>
<svg style="left:713px;top:15px" width="15" height="12"><use href="#i-checkgray"/></svg>
<div class="b" style="left:737px;top:10px;width:1px;height:22px;background:#a0a0a0"></div><div class="b" style="left:738px;top:10px;width:1px;height:22px;background:#fff"></div>
<svg style="left:745px;top:16px" width="12" height="10"><use href="#i-clockgray"/></svg>
<svg style="left:767px;top:12px" width="13" height="17"><use href="#i-clockgreen"/></svg>
<svg style="left:788px;top:15px" width="8" height="10"><use href="#i-dlgray"/></svg>
<div class="b" style="left:807px;top:7px;width:2px;height:30px;background:#848484"></div>
<svg style="left:811px;top:8.6px" width="7" height="25"><use href="#i-grip"/></svg>
<div class="b" style="left:818px;top:10px;width:23px;height:22px;background:#c0dcf3;border:1px solid #90c8f6"></div>
<svg style="left:825px;top:14.6px" width="9" height="14.6"><use href="#i-pointer"/></svg>
<div class="b" style="left:845px;top:10px;width:1px;height:22px;background:#a0a0a0"></div><div class="b" style="left:846px;top:10px;width:1px;height:22px;background:#fff"></div>
<svg style="left:852px;top:13px" width="16" height="16"><use href="#i-gear"/></svg>
<svg style="left:875px;top:13px" width="16" height="16"><use href="#i-cmd"/></svg>
<span class="t" style="left:878.4px;top:14.80px;font-size:6.5px;line-height:7px;font-weight:bold;color:#30e030;">C</span>
<svg style="left:898px;top:16px" width="16" height="10"><use href="#i-email"/></svg>
<div class="b" style="left:922px;top:10px;width:1px;height:22px;background:#a0a0a0"></div><div class="b" style="left:923px;top:10px;width:1px;height:22px;background:#fff"></div>
<svg style="left:929px;top:13px" width="16" height="16"><use href="#i-g1"/></svg>
<svg style="left:954px;top:13px" width="12" height="16"><use href="#i-calc"/></svg>
<svg style="left:974px;top:13px" width="17" height="16"><use href="#i-timer"/></svg>
<svg style="left:1000px;top:13px" width="11" height="16"><use href="#i-ctl"/></svg>
<svg style="left:1021px;top:13px" width="8" height="16"><use href="#i-g2"/></svg>
<svg style="left:1px;top:44px" width="16" height="16"><use href="#i-net1"/></svg>
<svg style="left:24px;top:44px" width="16" height="16"><use href="#i-net2"/></svg>
<svg style="left:47px;top:44px" width="16" height="16"><use href="#i-net3"/></svg>
<svg style="left:70px;top:44px" width="16" height="16"><use href="#i-net4"/></svg>
<div class="b" style="left:94px;top:41px;width:1px;height:22px;background:#a0a0a0"></div><div class="b" style="left:95px;top:41px;width:1px;height:22px;background:#fff"></div>
<svg style="left:101px;top:44px" width="16" height="16"><use href="#i-prop"/></svg>
<div class="b" style="left:127px;top:37px;width:1px;height:31px;background:#a0a0a0"></div>
<div class="b" style="left:128px;top:37px;width:109px;height:31px;border-left:1px solid #fff;border-right:1px solid #a0a0a0;border-bottom:1px solid #a0a0a0;background:#f0f0f0"></div>
<svg style="left:132.4px;top:40.5px" width="7" height="25"><use href="#i-grip"/></svg>
<div class="b" style="left:184px;top:41px;width:23px;height:22px;background:#c0dcf3;border:1px solid #90c8f6"></div>
<svg style="left:140.5px;top:43.2px" width="17" height="17" viewBox="0 0 17 17"><defs><radialGradient id="gR" cx="0.4" cy="0.3" r="0.8"><stop offset="0" stop-color="#8090c8"/><stop offset="1" stop-color="#2c3c78"/></radialGradient></defs><circle cx="8.5" cy="8.5" r="8.2" fill="url(#gR)"/><text x="8.5" y="12.1" text-anchor="middle" font-family="Liberation Sans,sans-serif" font-weight="bold" font-size="10.5" fill="#fff">R</text></svg>
<svg style="left:163.2px;top:43.2px" width="17" height="17" viewBox="0 0 17 17"><defs><radialGradient id="gD" cx="0.4" cy="0.3" r="0.8"><stop offset="0" stop-color="#30b850"/><stop offset="1" stop-color="#086820"/></radialGradient></defs><circle cx="8.5" cy="8.5" r="8.2" fill="url(#gD)"/><text x="8.5" y="12.1" text-anchor="middle" font-family="Liberation Sans,sans-serif" font-weight="bold" font-size="10.5" fill="#fff">D</text></svg>
<svg style="left:187px;top:43.2px" width="17" height="17" viewBox="0 0 17 17"><defs><radialGradient id="gW" cx="0.4" cy="0.3" r="0.8"><stop offset="0" stop-color="#f8a028"/><stop offset="1" stop-color="#c04008"/></radialGradient></defs><circle cx="8.5" cy="8.5" r="8.2" fill="url(#gW)"/><text x="8.5" y="12.1" text-anchor="middle" font-family="Liberation Sans,sans-serif" font-weight="bold" font-size="10.5" fill="#fff">W</text></svg>
<svg style="left:209.4px;top:43.2px" width="17" height="17" viewBox="0 0 17 17"><defs><radialGradient id="gM" cx="0.4" cy="0.3" r="0.8"><stop offset="0" stop-color="#7858b0"/><stop offset="1" stop-color="#2c1260"/></radialGradient></defs><circle cx="8.5" cy="8.5" r="8.2" fill="url(#gM)"/><text x="8.5" y="12.1" text-anchor="middle" font-family="Liberation Sans,sans-serif" font-weight="bold" font-size="10.5" fill="#fff">M</text></svg>
<div class="b" style="left:220px;top:69px;width:807px;height:1px;background:#a0a0a0"></div>
<div class="b" style="left:0px;top:69px;width:214px;height:18px;background:#f0f0f0"></div>
<div class="b" style="left:0px;top:74px;width:184px;height:3px;border-top:1px solid #fff;border-left:0;border-bottom:1px solid #a0a0a0;border-right:1px solid #a0a0a0;background:#f0f0f0"></div>
<div class="b" style="left:0px;top:78px;width:184px;height:3px;border-top:1px solid #fff;border-left:0;border-bottom:1px solid #a0a0a0;border-right:1px solid #a0a0a0;background:#f0f0f0"></div>
<div class="b" style="left:186px;top:72px;width:12px;height:11px;background:#f0f0f0;border-top:1px solid #fff;border-left:1px solid #fff;border-right:1px solid #696969;border-bottom:1px solid #696969"></div>
<svg style="left:189px;top:76px" width="6" height="4" viewBox="0 0 6 4"><path d="M0 0H6L3 3.5Z" fill="#a0a0a0"/></svg>
<div class="b" style="left:200px;top:72px;width:12px;height:11px;background:#f0f0f0;border-top:1px solid #fff;border-left:1px solid #fff;border-right:1px solid #696969;border-bottom:1px solid #696969"></div>
<svg style="left:202px;top:74.5px" width="6.5" height="6" viewBox="0 0 6.5 6"><path d="M0.6 0.4L5.9 5.6M5.9 0.4L0.6 5.6" stroke="#000" stroke-width="1.9"/></svg>
<div class="b" style="left:0px;top:86px;width:213px;height:394px;background:#fff;border-top:1px solid #a0a0a0;border-right:1px solid #a0a0a0;border-bottom:1px solid #a0a0a0"></div>
<div class="b" style="left:196px;top:87px;width:16px;height:375px;background:#f0f0f0"></div>
<div class="b" style="left:211px;top:87px;width:1px;height:392px;background:#f8f8f8"></div>
<div class="b" style="left:196px;top:104px;width:15px;height:253px;background:#cdcdcd"></div>
<svg style="left:200px;top:93.5px" width="7" height="5" viewBox="0 0 7 5"><path d="M0.6 4.4L3.5 1.4L6.4 4.4" stroke="#505050" stroke-width="1.9" fill="none"/></svg>
<svg style="left:200px;top:451.5px" width="7" height="5" viewBox="0 0 7 5"><path d="M0.6 0.6L3.5 3.6L6.4 0.6" stroke="#505050" stroke-width="1.9" fill="none"/></svg>
<div class="b" style="left:0px;top:462px;width:212px;height:17px;background:#f0f0f0"></div>
<div class="b" style="left:0px;top:462px;width:104px;height:17px;background:#cdcdcd"></div>
<svg style="left:184px;top:467px" width="6" height="7" viewBox="0 0 6 7"><path d="M0.9 0.5L4.6 3.5L0.9 6.5" stroke="#505050" stroke-width="2" fill="none"/></svg>
<div class="clip" style="left:0;top:87px;width:195px;height:375px">
<span class="t" style="left:-14.6px;top:2.00px;font-size:12px;line-height:14px;color:#000;transform:scaleX(0.9641);">Repositories</span>
<div class="b" style="left:1px;top:35px;width:1px;height:340px;background:repeating-linear-gradient(180deg,#a0a0a0 0 1px,transparent 1px 2px)"></div>
<svg style="left:-10px;top:20px" width="16" height="14"><use href="#i-db"/></svg>
<div class="b" style="left:19px;top:18px;width:42px;height:18px;border:1px solid #0078d7;background:#fff"></div>
<span class="t" style="left:21.3px;top:20.00px;font-size:12px;line-height:14px;color:#000;transform:scaleX(0.8925);">RepSvc</span>
<div class="b" style="left:2px;top:46px;width:18px;height:1px;background:repeating-linear-gradient(90deg,#a0a0a0 0 1px,transparent 1px 2px)"></div>
<svg style="left:30px;top:37px" width="10" height="15"><use href="#i-server"/></svg>
<span class="t" style="left:56.4px;top:38.00px;font-size:12px;line-height:14px;color:#000;transform:scaleX(0.9386);">IntSvc</span>
<div class="b" style="left:2px;top:64px;width:18px;height:1px;background:repeating-linear-gradient(90deg,#a0a0a0 0 1px,transparent 1px 2px)"></div>
<div class="b" style="left:-4px;top:60px;width:9px;height:9px;border:1px solid #919191;background:#fff;border-radius:1px"></div><div class="b" style="left:-2px;top:64px;width:5px;height:1px;background:#203080"></div><div class="b" style="left:0px;top:62px;width:1px;height:5px;background:#203080"></div>
<svg style="left:29px;top:56px" width="14" height="14"><use href="#i-foldy"/></svg>
<span class="t" style="left:56.4px;top:56.00px;font-size:12px;line-height:14px;color:#000;transform:scaleX(0.9739);">Assignements</span>
<div class="b" style="left:2px;top:82px;width:18px;height:1px;background:repeating-linear-gradient(90deg,#a0a0a0 0 1px,transparent 1px 2px)"></div>
<div class="b" style="left:-4px;top:78px;width:9px;height:9px;border:1px solid #919191;background:#fff;border-radius:1px"></div><div class="b" style="left:-2px;top:82px;width:5px;height:1px;background:#203080"></div><div class="b" style="left:0px;top:80px;width:1px;height:5px;background:#203080"></div>
<svg style="left:29px;top:74px" width="14" height="14"><use href="#i-foldy"/></svg>
<span class="t" style="left:56.4px;top:74.00px;font-size:12px;line-height:14px;color:#000;transform:scaleX(0.9493);">Blog</span>
<div class="b" style="left:2px;top:100px;width:18px;height:1px;background:repeating-linear-gradient(90deg,#a0a0a0 0 1px,transparent 1px 2px)"></div>
<div class="b" style="left:-4px;top:96px;width:9px;height:9px;border:1px solid #919191;background:#fff;border-radius:1px"></div><div class="b" style="left:-2px;top:100px;width:5px;height:1px;background:#203080"></div><div class="b" style="left:0px;top:98px;width:1px;height:5px;background:#203080"></div>
<svg style="left:29px;top:92px" width="14" height="14"><use href="#i-foldy"/></svg>
<span class="t" style="left:56.4px;top:92.00px;font-size:12px;line-height:14px;color:#000;transform:scaleX(1.0101);">exploreinfomatica</span>
<div class="b" style="left:2px;top:118px;width:18px;height:1px;background:repeating-linear-gradient(90deg,#a0a0a0 0 1px,transparent 1px 2px)"></div>
<div class="b" style="left:-4px;top:114px;width:9px;height:9px;border:1px solid #919191;background:#fff;border-radius:1px"></div><div class="b" style="left:-2px;top:118px;width:5px;height:1px;background:#203080"></div><div class="b" style="left:0px;top:116px;width:1px;height:5px;background:#203080"></div>
<svg style="left:29px;top:110px" width="14" height="14"><use href="#i-foldy"/></svg>
<span class="t" style="left:56.4px;top:110.00px;font-size:12px;line-height:14px;color:#000;transform:scaleX(1.0113);">firsttransform</span>
<div class="b" style="left:2px;top:136px;width:18px;height:1px;background:repeating-linear-gradient(90deg,#a0a0a0 0 1px,transparent 1px 2px)"></div>
<div class="b" style="left:-4px;top:132px;width:9px;height:9px;border:1px solid #919191;background:#fff;border-radius:1px"></div><div class="b" style="left:-2px;top:136px;width:5px;height:1px;background:#203080"></div>
<svg style="left:29px;top:128px" width="14" height="14"><use href="#i-foldy"/></svg>
<span class="t" style="left:56.4px;top:128.00px;font-size:12px;line-height:14px;font-weight:bold;color:#000;transform:scaleX(0.9636);">Transformations</span>
<div class="b" style="left:35px;top:143px;width:1px;height:66px;background:repeating-linear-gradient(180deg,#a0a0a0 0 1px,transparent 1px 2px)"></div>
<div class="b" style="left:37px;top:154px;width:18px;height:1px;background:repeating-linear-gradient(90deg,#a0a0a0 0 1px,transparent 1px 2px)"></div>
<svg style="left:64px;top:146px" width="14" height="14"><use href="#i-foldb"/></svg>
<span class="t" style="left:91.6px;top:146.00px;font-size:12px;line-height:14px;color:#000;transform:scaleX(0.8835);">Tasks</span>
<div class="b" style="left:37px;top:172px;width:18px;height:1px;background:repeating-linear-gradient(90deg,#a0a0a0 0 1px,transparent 1px 2px)"></div>
<div class="b" style="left:31px;top:168px;width:9px;height:9px;border:1px solid #919191;background:#fff;border-radius:1px"></div><div class="b" style="left:33px;top:172px;width:5px;height:1px;background:#203080"></div><div class="b" style="left:35px;top:170px;width:1px;height:5px;background:#203080"></div>
<svg style="left:64px;top:164px" width="14" height="14"><use href="#i-foldb"/></svg>
<span class="t" style="left:91.6px;top:164.00px;font-size:12px;line-height:14px;color:#000;transform:scaleX(0.8872);">Sessions</span>
<div class="b" style="left:37px;top:190px;width:18px;height:1px;background:repeating-linear-gradient(90deg,#a0a0a0 0 1px,transparent 1px 2px)"></div>
<svg style="left:64px;top:182px" width="14" height="14"><use href="#i-foldb"/></svg>
<span class="t" style="left:91.6px;top:182.00px;font-size:12px;line-height:14px;color:#000;transform:scaleX(0.9730);">Worklets</span>
<div class="b" style="left:37px;top:208px;width:18px;height:1px;background:repeating-linear-gradient(90deg,#a0a0a0 0 1px,transparent 1px 2px)"></div>
<div class="b" style="left:31px;top:204px;width:9px;height:9px;border:1px solid #919191;background:#fff;border-radius:1px"></div><div class="b" style="left:33px;top:208px;width:5px;height:1px;background:#203080"></div>
<svg style="left:64px;top:200px" width="14" height="14"><use href="#i-foldb"/></svg>
<span class="t" style="left:91.6px;top:200.00px;font-size:12px;line-height:14px;color:#000;transform:scaleX(1.0015);">Workflows</span>
<div class="b" style="left:70px;top:215px;width:1px;height:160px;background:repeating-linear-gradient(180deg,#a0a0a0 0 1px,transparent 1px 2px)"></div>
<div class="b" style="left:76px;top:226px;width:13px;height:1px;background:repeating-linear-gradient(90deg,#a0a0a0 0 1px,transparent 1px 2px)"></div>
<div class="b" style="left:66px;top:222px;width:9px;height:9px;border:1px solid #919191;background:#fff;border-radius:1px"></div><div class="b" style="left:68px;top:226px;width:5px;height:1px;background:#203080"></div><div class="b" style="left:70px;top:224px;width:1px;height:5px;background:#203080"></div>
<svg style="left:89px;top:218px" width="8" height="7"><use href="#i-check"/></svg>
<svg style="left:97px;top:217px" width="16" height="16"><use href="#i-wf"/></svg>
<span class="t" style="left:126.8px;top:218.00px;font-size:12px;line-height:14px;color:#000;transform:scaleX(0.9941);">wf_mapplet</span>
<div class="b" style="left:76px;top:244px;width:13px;height:1px;background:repeating-linear-gradient(90deg,#a0a0a0 0 1px,transparent 1px 2px)"></div>
<div class="b" style="left:66px;top:240px;width:9px;height:9px;border:1px solid #919191;background:#fff;border-radius:1px"></div><div class="b" style="left:68px;top:244px;width:5px;height:1px;background:#203080"></div><div class="b" style="left:70px;top:242px;width:1px;height:5px;background:#203080"></div>
<svg style="left:89px;top:236px" width="8" height="7"><use href="#i-check"/></svg>
<svg style="left:97px;top:235px" width="16" height="16"><use href="#i-wf"/></svg>
<span class="t" style="left:126.8px;top:236.00px;font-size:12px;line-height:14px;color:#000;transform:scaleX(0.9651);">wf_normalization</span>
<div class="b" style="left:76px;top:262px;width:13px;height:1px;background:repeating-linear-gradient(90deg,#a0a0a0 0 1px,transparent 1px 2px)"></div>
<div class="b" style="left:66px;top:258px;width:9px;height:9px;border:1px solid #919191;background:#fff;border-radius:1px"></div><div class="b" style="left:68px;top:262px;width:5px;height:1px;background:#203080"></div><div class="b" style="left:70px;top:260px;width:1px;height:5px;background:#203080"></div>
<svg style="left:97px;top:253px" width="16" height="16"><use href="#i-wf"/></svg>
<span class="t" style="left:126.8px;top:254.00px;font-size:12px;line-height:14px;color:#000;transform:scaleX(0.9652);">wf_normalizer_demo</span>
<div class="b" style="left:76px;top:280px;width:13px;height:1px;background:repeating-linear-gradient(90deg,#a0a0a0 0 1px,transparent 1px 2px)"></div>
<div class="b" style="left:66px;top:276px;width:9px;height:9px;border:1px solid #919191;background:#fff;border-radius:1px"></div><div class="b" style="left:68px;top:280px;width:5px;height:1px;background:#203080"></div><div class="b" style="left:70px;top:278px;width:1px;height:5px;background:#203080"></div>
<svg style="left:89px;top:272px" width="8" height="7"><use href="#i-check"/></svg>
<svg style="left:97px;top:271px" width="16" height="16"><use href="#i-wf"/></svg>
<span class="t" style="left:126.8px;top:272.00px;font-size:12px;line-height:14px;color:#000;transform:scaleX(0.9218);">wf_oracle_to_oracle</span>
<div class="b" style="left:76px;top:298px;width:13px;height:1px;background:repeating-linear-gradient(90deg,#a0a0a0 0 1px,transparent 1px 2px)"></div>
<div class="b" style="left:66px;top:294px;width:9px;height:9px;border:1px solid #919191;background:#fff;border-radius:1px"></div><div class="b" style="left:68px;top:298px;width:5px;height:1px;background:#203080"></div><div class="b" style="left:70px;top:296px;width:1px;height:5px;background:#203080"></div>
<svg style="left:89px;top:290px" width="8" height="7"><use href="#i-check"/></svg>
<svg style="left:97px;top:289px" width="16" height="16"><use href="#i-wf"/></svg>
<span class="t" style="left:126.8px;top:290.00px;font-size:12px;line-height:14px;color:#000;transform:scaleX(0.8662);">wf_SCD1</span>
<div class="b" style="left:76px;top:316px;width:13px;height:1px;background:repeating-linear-gradient(90deg,#a0a0a0 0 1px,transparent 1px 2px)"></div>
<div class="b" style="left:66px;top:312px;width:9px;height:9px;border:1px solid #919191;background:#fff;border-radius:1px"></div><div class="b" style="left:68px;top:316px;width:5px;height:1px;background:#203080"></div><div class="b" style="left:70px;top:314px;width:1px;height:5px;background:#203080"></div>
<svg style="left:97px;top:307px" width="16" height="16"><use href="#i-wf"/></svg>
<span class="t" style="left:126.8px;top:308.00px;font-size:12px;line-height:14px;color:#000;transform:scaleX(0.8369);">WF_SCD_TYPE1</span>
<div class="b" style="left:76px;top:334px;width:13px;height:1px;background:repeating-linear-gradient(90deg,#a0a0a0 0 1px,transparent 1px 2px)"></div>
<div class="b" style="left:66px;top:330px;width:9px;height:9px;border:1px solid #919191;background:#fff;border-radius:1px"></div><div class="b" style="left:68px;top:334px;width:5px;height:1px;background:#203080"></div><div class="b" style="left:70px;top:332px;width:1px;height:5px;background:#203080"></div>
<svg style="left:89px;top:326px" width="8" height="7"><use href="#i-check"/></svg>
<svg style="left:97px;top:325px" width="16" height="16"><use href="#i-wf"/></svg>
<span class="t" style="left:126.8px;top:326.00px;font-size:12px;line-height:14px;color:#000;transform:scaleX(0.8354);">wf_SCD_TYPE2</span>
<div class="b" style="left:76px;top:352px;width:13px;height:1px;background:repeating-linear-gradient(90deg,#a0a0a0 0 1px,transparent 1px 2px)"></div>
<div class="b" style="left:66px;top:348px;width:9px;height:9px;border:1px solid #919191;background:#fff;border-radius:1px"></div><div class="b" style="left:68px;top:352px;width:5px;height:1px;background:#203080"></div><div class="b" style="left:70px;top:350px;width:1px;height:5px;background:#203080"></div>
<svg style="left:97px;top:343px" width="16" height="16"><use href="#i-wf"/></svg>
<span class="t" style="left:126.8px;top:344.00px;font-size:12px;line-height:14px;color:#000;transform:scaleX(0.8369);">WF_SCD_TYPE3</span>
<div class="b" style="left:76px;top:370px;width:13px;height:1px;background:repeating-linear-gradient(90deg,#a0a0a0 0 1px,transparent 1px 2px)"></div>
<div class="b" style="left:66px;top:366px;width:9px;height:9px;border:1px solid #919191;background:#fff;border-radius:1px"></div><div class="b" style="left:68px;top:370px;width:5px;height:1px;background:#203080"></div><div class="b" style="left:70px;top:368px;width:1px;height:5px;background:#203080"></div>
<svg style="left:97px;top:361px" width="16" height="16"><use href="#i-wf"/></svg>
<span class="t" style="left:126.8px;top:362.00px;font-size:12px;line-height:14px;color:#000;transform:scaleX(0.9617);">wf_stored_proc</span>
</div>
<div class="b" style="left:220px;top:70px;width:807px;height:40px;background:#f0f0f0"></div>
<div class="b" style="left:220px;top:70px;width:1px;height:410px;background:#a0a0a0"></div>
<div class="b" style="left:226px;top:73px;width:87px;height:33px;background:#c0dcf3;border:1px solid #90c8f6"></div>
<svg style="left:230px;top:77px" width="28" height="26"><use href="#i-taskdev"/></svg>
<svg style="left:256px;top:87px" width="9" height="17"><use href="#i-pen"/></svg>
<span class="t" style="left:266px;top:80.00px;font-size:9.8px;line-height:11px;color:#000;transform:scaleX(0.9826);">Task</span>
<span class="t" style="left:266px;top:91.00px;font-size:9.8px;line-height:11px;color:#000;transform:scaleX(0.9403);">Developer</span>
<svg style="left:316px;top:76px" width="32" height="26"><use href="#i-worklet"/></svg>
<svg style="left:343px;top:82.5px" width="9" height="17"><use href="#i-pen"/></svg>
<span class="t" style="left:356.8px;top:77.00px;font-size:9.8px;line-height:11px;color:#000;transform:scaleX(0.9535);">Worklet</span>
<span class="t" style="left:356.8px;top:88.00px;font-size:9.8px;line-height:11px;color:#000;transform:scaleX(0.9231);">Designer</span>
<svg style="left:405px;top:76px" width="30" height="26"><use href="#i-workflow"/></svg>
<svg style="left:433px;top:85.5px" width="9" height="17"><use href="#i-pen"/></svg>
<span class="t" style="left:444px;top:78.00px;font-size:9.8px;line-height:11px;color:#000;transform:scaleX(0.9473);">Workflow</span>
<span class="t" style="left:444px;top:89.00px;font-size:9.8px;line-height:11px;color:#000;transform:scaleX(0.9231);">Designer</span>
<div class="b" style="left:500px;top:73px;width:1px;height:34px;background:#a0a0a0"></div><div class="b" style="left:501px;top:73px;width:1px;height:34px;background:#fff"></div>
<div class="b" style="left:220px;top:110px;width:807px;height:370px;background:#fff;border-top:1px solid #a0a0a0;border-left:1px solid #a0a0a0;border-bottom:1px solid #e3e3e3"></div>
<div class="b" style="left:221px;top:111px;width:806px;height:368px;border-top:1px solid #696969;border-left:1px solid #696969"></div>
<span class="t" style="left:229.4px;top:119.00px;font-size:14px;line-height:16px;color:#fff;transform:scaleX(1.1089);text-shadow:1px 1px 0 #969696;">Task Developer</span>
<svg style="left:277px;top:141px" width="44" height="40"><use href="#i-taskbig"/></svg>
<span class="t" style="left:288.5px;top:185.50px;font-size:11px;line-height:12px;color:#000;transform:scaleX(0.9756);">s_scd1</span>
<div class="b" style="left:222px;top:463px;width:805px;height:16px;background:#f0f0f0"></div>
<div class="b" style="left:239px;top:463px;width:285px;height:15px;background:#cdcdcd"></div>
<svg style="left:227px;top:467.2px" width="6" height="7" viewBox="0 0 6 7"><path d="M5.1 0.5L1.4 3.5L5.1 6.5" stroke="#505050" stroke-width="2" fill="none"/></svg>
<div class="b" style="left:0px;top:480px;width:1027px;height:7px;background:#fff"></div>
<div class="b" style="left:0px;top:487px;width:1027px;height:1px;background:#9a9a9a"></div>
<div class="b" style="left:0px;top:488px;width:1027px;height:1px;background:#555"></div>
<div class="b" style="left:0px;top:489px;width:1027px;height:9px;background:#fff"></div>
<div class="clip" style="left:0;top:488px;width:1027px;height:10px">
<span class="t" style="left:0px;top:1.00px;font-size:12.5px;line-height:14px;color:#000;transform:scaleX(0.8733);">GB04/17/2023 14:30:09-[REP_55101]</span>
<span class="t" style="left:187.3px;top:1.00px;font-size:12.5px;line-height:14px;color:#000;transform:scaleX(0.8469);">Connection to the Repository Service [RepSvc] is broken.</span>
</div>
<div class="b" style="left:330px;top:153px;width:467px;height:289px;background:#f0f0f0;border:1px solid #6a6a6a;box-shadow:0 4px 18px 2px rgba(0,0,0,0.28)"></div>
<div class="b" style="left:331px;top:154px;width:465px;height:30px;background:#fff"></div>
<svg style="left:339px;top:162px" width="15" height="12"><use href="#i-dlgicon"/></svg>
<span class="t" style="left:359.8px;top:162.00px;font-size:12px;line-height:14px;color:#000;transform:scaleX(1.0090);">Mappings</span>
<svg style="left:776px;top:163px" width="10" height="10" viewBox="0 0 10 10"><path d="M0 0L10 10M10 0L0 10" stroke="#000" stroke-width="1.1"/></svg>
<span class="t" style="left:339.8px;top:190.00px;font-size:11px;line-height:12px;color:#000;transform:scaleX(0.9738);">Please select a mapping to associate with the session:</span>
<div class="b" style="left:340px;top:217px;width:359px;height:218px;background:#fff;border:1px solid #828790"></div>
<div class="b" style="left:681px;top:219px;width:16px;height:214px;background:#f0f0f0"></div>
<div class="b" style="left:681px;top:236px;width:15px;height:156px;background:#cdcdcd"></div>
<svg style="left:685px;top:224.6px" width="7.4" height="6" viewBox="0 0 7.4 6"><path d="M0.6 5.3L3.7 1.7L6.8 5.3" stroke="#505050" stroke-width="2.1" fill="none"/></svg>
<svg style="left:685px;top:421.8px" width="7.4" height="6" viewBox="0 0 7.4 6"><path d="M0.6 0.7L3.7 4.3L6.8 0.7" stroke="#505050" stroke-width="2.1" fill="none"/></svg>
<div class="clip" style="left:341px;top:219px;width:340px;height:214px">
<svg style="left:6px;top:1px" width="14" height="14"><use href="#i-map"/></svg>
<div class="b" style="left:23px;top:0px;width:71px;height:16px;background:#0078d7"></div>
<span class="t" style="left:25px;top:2.00px;font-size:11px;line-height:12px;color:#fff;transform:scaleX(0.9469);">Assignment_1</span>
<svg style="left:6px;top:17px" width="14" height="14"><use href="#i-map"/></svg>
<span class="t" style="left:24.19999999999999px;top:18.00px;font-size:11px;line-height:12px;color:#000;transform:scaleX(0.9557);">m_mapplet</span>
<svg style="left:6px;top:33px" width="14" height="14"><use href="#i-map"/></svg>
<span class="t" style="left:24.19999999999999px;top:34.00px;font-size:11px;line-height:12px;color:#000;transform:scaleX(0.9542);">m_normalization</span>
<svg style="left:6px;top:49px" width="14" height="14"><use href="#i-map"/></svg>
<span class="t" style="left:24.19999999999999px;top:50.00px;font-size:11px;line-height:12px;color:#000;transform:scaleX(0.9548);">m_normalization_demo2</span>
<svg style="left:6px;top:65px" width="14" height="14"><use href="#i-map"/></svg>
<span class="t" style="left:24.19999999999999px;top:66.00px;font-size:11px;line-height:12px;color:#000;transform:scaleX(0.8934);">m_SCD_TYPE1</span>
<svg style="left:6px;top:81px" width="14" height="14"><use href="#i-map"/></svg>
<span class="t" style="left:24.19999999999999px;top:82.00px;font-size:11px;line-height:12px;color:#000;transform:scaleX(0.8934);">m_SCD_TYPE2</span>
<svg style="left:6px;top:97px" width="14" height="14"><use href="#i-map"/></svg>
<span class="t" style="left:24.19999999999999px;top:98.00px;font-size:11px;line-height:12px;color:#000;transform:scaleX(0.8879);">m_SCD_TYPE2_FLAG</span>
<svg style="left:6px;top:113px" width="14" height="14"><use href="#i-map"/></svg>
<span class="t" style="left:24.19999999999999px;top:114.00px;font-size:11px;line-height:12px;color:#000;transform:scaleX(0.8934);">m_SCD_TYPE3</span>
<svg style="left:6px;top:129px" width="14" height="14"><use href="#i-map"/></svg>
<span class="t" style="left:24.19999999999999px;top:130.00px;font-size:11px;line-height:12px;color:#000;transform:scaleX(0.9928);">m_stored_proc_transform_connected</span>
<svg style="left:6px;top:145px" width="14" height="14"><use href="#i-map"/></svg>
<span class="t" style="left:24.19999999999999px;top:146.00px;font-size:11px;line-height:12px;color:#000;transform:scaleX(0.9826);">m_stored_proc_unconnected</span>
<svg style="left:6px;top:161px" width="14" height="14"><use href="#i-map"/></svg>
<span class="t" style="left:24.19999999999999px;top:162.00px;font-size:11px;line-height:12px;color:#000;transform:scaleX(0.9906);">m_union_tarnsformation</span>
<svg style="left:6px;top:177px" width="14" height="14"><use href="#i-map"/></svg>
<span class="t" style="left:24.19999999999999px;top:178.00px;font-size:11px;line-height:12px;color:#000;transform:scaleX(1.0078);">m_upd_stratagy_transformation</span>
<svg style="left:6px;top:193px" width="14" height="14"><use href="#i-map"/></svg>
<span class="t" style="left:24.19999999999999px;top:194.00px;font-size:11px;line-height:12px;color:#000;transform:scaleX(0.9979);">m_upd_update_transformation</span>
<svg style="left:6px;top:209px" width="14" height="14"><use href="#i-map"/></svg>
<span class="t" style="left:24.19999999999999px;top:210.00px;font-size:11px;line-height:12px;color:#000;transform:scaleX(0.9792);">m_web_consumer</span>
</div>
<div class="b" style="left:713px;top:218px;width:73px;height:21px;background:#e1e1e1;border:2px solid #0078d7"></div><span class="t" style="left:741.05px;top:223.00px;font-size:11px;line-height:12px;color:#000;transform:scaleX(0.9123);">OK</span>
<div class="b" style="left:713px;top:250px;width:73px;height:21px;background:#e1e1e1;border:1px solid #adadad"></div><span class="t" style="left:732.5px;top:255.00px;font-size:11px;line-height:12px;color:#000;transform:scaleX(0.9288);">Cancel</span>
<div class="b" style="left:713px;top:284px;width:73px;height:21px;background:#e1e1e1;border:1px solid #adadad"></div><span class="t" style="left:738.0px;top:289.00px;font-size:11px;line-height:12px;color:#000;transform:scaleX(0.9725);">Help</span>
<svg style="left:787px;top:432px" width="9" height="9" viewBox="0 0 9 9"><path d="M8.5 0.5L0.5 8.5M8.5 3.5L3.5 8.5M8.5 6.5L6.5 8.5" stroke="#a0a0a0" stroke-width="0.9"/><path d="M9 1.5L1.5 9M9 4.5L4.5 9" stroke="#fff" stroke-width="0.8"/></svg>
<svg style="left:565px;top:142.6px" width="12" height="20" viewBox="0 0 12 20"><path d="M0.6 0.7V17L4.3 13.4L7 19.2L9.4 18.2L6.8 12.7H11.6Z" fill="#fff" stroke="#14141e" stroke-width="1" stroke-linejoin="miter"/></svg>
</body></html>
